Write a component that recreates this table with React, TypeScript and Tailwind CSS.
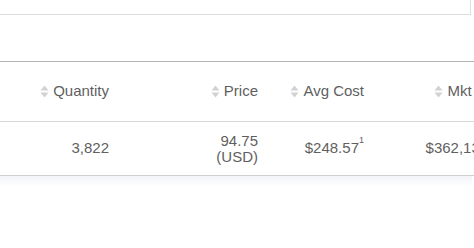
import React from "react";

function SortIcon() {
  return (
    <svg width="9" height="13" viewBox="0 0 9 13" className="shrink-0">
      <path d="M4.5 0.5 L8.5 5.5 L0.5 5.5 Z" fill="#d2d2d2" />
      <path d="M4.5 12.5 L8.5 7.5 L0.5 7.5 Z" fill="#d2d2d2" />
    </svg>
  );
}

const cols = ["w-[117px]", "w-[149px]", "w-[106px]", "w-[149px]"];

function HeaderCell({ label, width }: { label: string; width: string }) {
  return (
    <div className={`${width} shrink-0 flex items-center justify-end gap-[4px] pr-2`}>
      <SortIcon />
      <span>{label}</span>
    </div>
  );
}

export default function App() {
  return (
    <div
      className="w-[474px] h-[248px] overflow-hidden bg-white text-[15px] text-[#5f5f5f]"
      style={{ fontFamily: "'Liberation Sans', Arial, sans-serif" }}
    >
      <div className="w-[471px] h-[15px] border-b border-r border-[#dedede]" />
      <div className="h-[46px]" />
      <div className="w-[521px]">
        <div className="flex h-[61px] border-t border-b border-t-[#b4b4b4] border-b-[#d8d8d8]">
          <HeaderCell label="Quantity" width={cols[0]} />
          <HeaderCell label="Price" width={cols[1]} />
          <HeaderCell label="Avg Cost" width={cols[2]} />
          <HeaderCell label="Mkt Value" width={cols[3]} />
        </div>
        <div className="flex h-[54px] border-b border-[#cfcfcf] items-center">
          <div className={`${cols[0]} shrink-0 text-right pr-2`}>3,822</div>
          <div className={`${cols[1]} shrink-0 text-right pr-2 leading-[16px]`}>
            <div>94.75</div>
            <div>(USD)</div>
          </div>
          <div className={`${cols[2]} shrink-0 text-right pr-2`}>
            $248.57<sup className="text-[9px] align-super">1</sup>
          </div>
          <div className={`${cols[3]} shrink-0 text-right pr-3`}>$362,134.70</div>
        </div>
        <div className="h-[11px] w-[472px] bg-gradient-to-b from-[#f3f4f9] to-white" />
      </div>
    </div>
  );
}
